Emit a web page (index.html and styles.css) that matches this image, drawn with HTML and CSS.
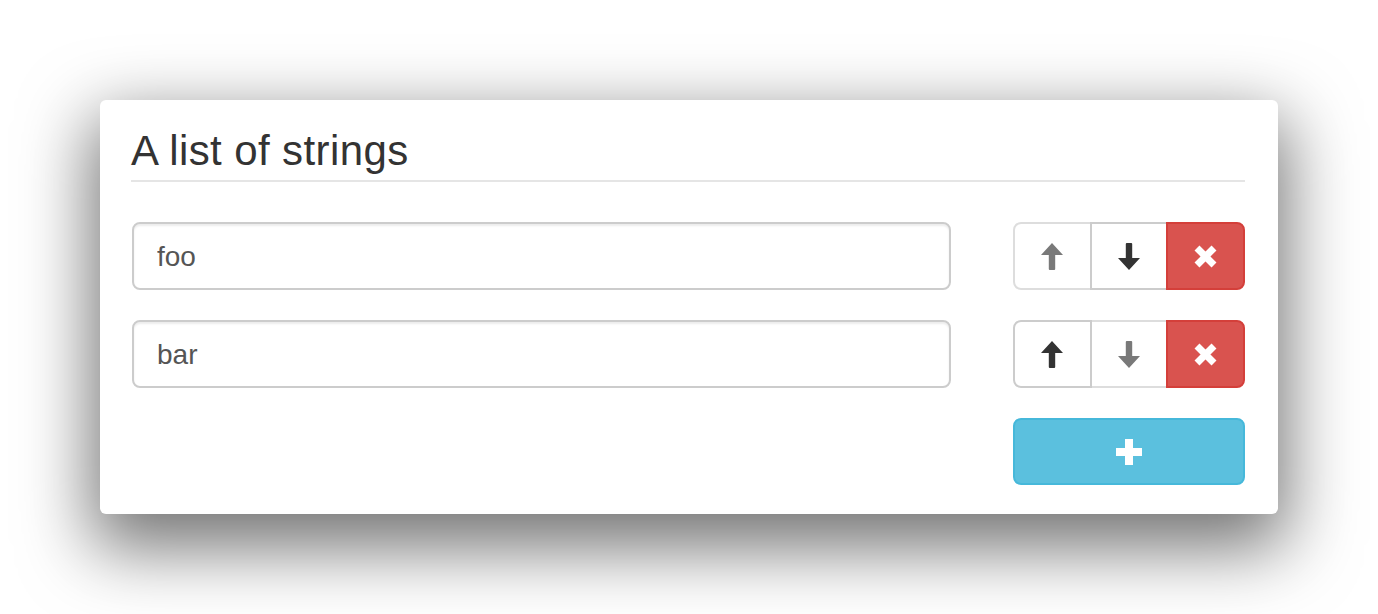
FILE: index.html
```html
<!DOCTYPE html>
<html>
<head>
<meta charset="utf-8">
<link rel="stylesheet" href="styles.css">
</head>
<body>
<div class="page">
<div class="card">
  <div class="legend">A list of strings</div>
  <div class="row">
    <input class="field" type="text" value="foo">
    <div class="group">
      <button class="btn btn-default disabled"><svg width="22" height="27" viewBox="0 0 22 27"><path d="M11 0 L22 12 L14.2 12 L14.2 26 Q14.2 27 13.2 27 L8.8 27 Q7.8 27 7.8 26 L7.8 12 L0 12 Z" fill="#333"/></svg></button>
      <button class="btn btn-default"><svg width="22" height="27" viewBox="0 0 22 27"><path d="M11 27 L22 15 L14.2 15 L14.2 1 Q14.2 0 13.2 0 L8.8 0 Q7.8 0 7.8 1 L7.8 15 L0 15 Z" fill="#333"/></svg></button>
      <button class="btn btn-danger"><svg width="23" height="23" viewBox="0 0 23 23"><path d="M3 3 L20 20 M20 3 L3 20" stroke="#fff" stroke-width="7"/></svg></button>
    </div>
  </div>
  <div class="row">
    <input class="field" type="text" value="bar">
    <div class="group">
      <button class="btn btn-default"><svg width="22" height="27" viewBox="0 0 22 27"><path d="M11 0 L22 12 L14.2 12 L14.2 26 Q14.2 27 13.2 27 L8.8 27 Q7.8 27 7.8 26 L7.8 12 L0 12 Z" fill="#333"/></svg></button>
      <button class="btn btn-default disabled"><svg width="22" height="27" viewBox="0 0 22 27"><path d="M11 27 L22 15 L14.2 15 L14.2 1 Q14.2 0 13.2 0 L8.8 0 Q7.8 0 7.8 1 L7.8 15 L0 15 Z" fill="#333"/></svg></button>
      <button class="btn btn-danger"><svg width="23" height="23" viewBox="0 0 23 23"><path d="M3 3 L20 20 M20 3 L3 20" stroke="#fff" stroke-width="7"/></svg></button>
    </div>
  </div>
  <div class="row row-end">
    <button class="btn btn-info add"><svg width="26" height="26" viewBox="0 0 26 26"><path d="M13 1.5 L13 24.5 M1.5 13 L24.5 13" stroke="#fff" stroke-width="8" stroke-linecap="square" stroke-linejoin="round"/></svg></button>
  </div>
</div>
</div>
</body>
</html>
```

FILE: styles.css
```css
html, body {
  margin: 0;
  padding: 0;
  background: #fff;
  font-family: "Liberation Sans", Arial, sans-serif;
}

.page {
  box-sizing: border-box;
  min-height: 614px;
  padding: 100px 100px 100px 100px;
}

.card {
  box-sizing: border-box;
  width: 1178px;
  height: 414px;
  padding: 20px 33px 29px 31px;
  background: #fff;
  border-radius: 6px;
  box-shadow: 0 26px 70px 8px rgba(0, 0, 0, 0.55);
}

.legend {
  font-size: 42px;
  line-height: 59px;
  padding-top: 1px;
  letter-spacing: 0.4px;
  color: #333;
  border-bottom: 2px solid #e5e5e5;
  margin-bottom: 40px;
}

.row {
  display: flex;
  gap: 62px;
  margin-bottom: 30px;
  padding-left: 1px;
}

.row-end {
  justify-content: flex-end;
  margin-bottom: 0;
}

.field {
  flex: 1;
  box-sizing: border-box;
  height: 68px;
  margin: 0;
  padding: 2px 23px 0;
  font-family: "Liberation Sans", Arial, sans-serif;
  font-size: 28px;
  color: #555;
  background: #fff;
  border: 2px solid #ccc;
  border-radius: 8px;
  box-shadow: inset 0 2px 2px rgba(0, 0, 0, 0.075);
  outline: none;
}

.group {
  display: flex;
  width: 232px;
  flex: none;
}

.btn {
  box-sizing: border-box;
  height: 68px;
  margin: 0;
  padding: 0;
  border: 2px solid;
  display: flex;
  align-items: center;
  justify-content: center;
  cursor: pointer;
  position: relative;
}

.group .btn {
  flex: 1;
  border-radius: 0;
}

.group .btn + .btn {
  margin-left: -2px;
}

.group .btn:first-child {
  border-radius: 8px 0 0 8px;
}

.group .btn:last-child {
  border-radius: 0 8px 8px 0;
}

.btn-default {
  background: #fff;
  border-color: #ccc;
}

.btn-danger {
  background: #d9534f;
  border-color: #d43f3a;
}

.btn-info {
  background: #5bc0de;
  border-color: #46b8da;
}

.disabled {
  opacity: 0.65;
}

.add {
  width: 232px;
  height: 67px;
  border-radius: 8px;
}
```
